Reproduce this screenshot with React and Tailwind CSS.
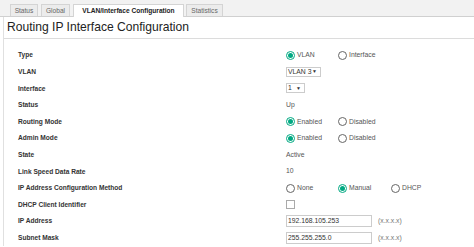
import React from "react";

const Radio = ({ checked, label, w }) => (
  <div className="flex items-center" style={w ? { width: w } : undefined}>
    <span
      className={`flex h-[9px] w-[9px] items-center justify-center rounded-full border ${
        checked ? "border-[#01a982]" : "border-[#666]"
      } bg-white`}
    >
      {checked && <span className="h-[5px] w-[5px] rounded-full bg-[#01a982]" />}
    </span>
    <span className="ml-[2px] text-[6.8px] text-[#555]">{label}</span>
  </div>
);

const Select = ({ value, w }) => (
  <div
    className="flex h-[10px] items-center justify-between border border-[#ccc] bg-white pl-[1px] pr-[3px] text-[6.8px] text-[#333]"
    style={{ width: w }}
  >
    <span>{value}</span>
    <span className="text-[5px]">▼</span>
  </div>
);

const Input = ({ value }) => (
  <div className="flex items-center">
    <div className="flex h-[12px] w-[86px] items-center border border-[#ccc] bg-white pl-[1px] text-[6.8px] text-[#333]">
      {value}
    </div>
    <span className="ml-[6px] text-[6.8px] text-[#777]">(x.x.x.x)</span>
  </div>
);

const rows = [
  ["Type", <div className="flex"><Radio checked label="VLAN" w={52} /><Radio label="Interface" /></div>],
  ["VLAN", <Select value="VLAN 3" w={35} />],
  ["Interface", <Select value="1" w={19} />],
  ["Status", <span className="text-[6.8px] text-[#555]">Up</span>],
  ["Routing Mode", <div className="flex"><Radio checked label="Enabled" w={52} /><Radio label="Disabled" /></div>],
  ["Admin Mode", <div className="flex"><Radio checked label="Enabled" w={52} /><Radio label="Disabled" /></div>],
  ["State", <span className="text-[6.8px] text-[#555]">Active</span>],
  ["Link Speed Data Rate", <span className="text-[6.8px] text-[#555]">10</span>],
  ["IP Address Configuration Method", <div className="flex"><Radio label="None" w={52} /><Radio checked label="Manual" w={53} /><Radio label="DHCP" /></div>],
  ["DHCP Client Identifier", <span className="block h-[9px] w-[9px] border border-[#aaa] bg-white" />],
  ["IP Address", <Input value="192.168.105.253" />],
  ["Subnet Mask", <Input value="255.255.255.0" />],
];

export default function App() {
  return (
    <div className="h-[247px] w-[474px] overflow-hidden bg-white font-['Liberation_Sans',Arial,sans-serif]">
      <div className="flex h-[17px] items-end border-b border-[#d0d0d0] bg-[#f2f2f2] pl-[10px]">
        <div className="mr-[3px] flex h-[12px] w-[28px] items-center justify-center border border-b-0 border-[#d4d4d4] bg-[#ececec] text-[6.6px] text-[#666]">Status</div>
        <div className="mr-[3px] flex h-[12px] w-[29px] items-center justify-center border border-b-0 border-[#d4d4d4] bg-[#ececec] text-[6.6px] text-[#666]">Global</div>
        <div className="mr-[2px] flex h-[13px] w-[111px] items-center justify-center border border-b-0 border-[#d4d4d4] bg-white text-[6.6px] font-bold text-[#222] mb-[-1px]">VLAN/Interface Configuration</div>
        <div className="flex h-[12px] w-[37px] items-center justify-center border border-b-0 border-[#d4d4d4] bg-[#ececec] text-[6.6px] text-[#666]">Statistics</div>
      </div>
      <div className="ml-[3px] border-l border-[#e0e0e0]">
        <div className="flex h-[22px] items-center border-b border-[#dcdcdc] pl-[3px] text-[12.1px] text-[#222]">
          Routing IP Interface Configuration
        </div>
        <div className="pt-[8px]">
          {rows.map(([label, value], i) => (
            <div key={i} className="flex h-[16.6px] items-center">
              <div className="w-[282px] pl-[14px] text-[6.6px] font-bold text-[#333]">{label}</div>
              <div className="flex items-center">{value}</div>
            </div>
          ))}
        </div>
      </div>
    </div>
  );
}
